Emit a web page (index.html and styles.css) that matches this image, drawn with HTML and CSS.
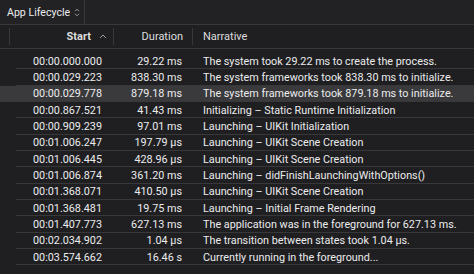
FILE: index.html
```html
<!DOCTYPE html>
<html lang="en">
<head>
  <meta charset="UTF-8">
  <title>App Lifecycle</title>
  <link rel="stylesheet" href="styles.css">
</head>
<body>
  <header class="toolbar">
    <div class="picker">
      <span>App Lifecycle</span>
      <svg class="updown" width="6" height="9" viewBox="0 0 6 9"><path d="M1 3.2 3 1.2 5 3.2M1 5.8 3 7.8 5 5.8" fill="none" stroke="currentColor" stroke-width="1"/></svg>
    </div>
  </header>

  <section class="table">
    <div class="head">
      <span class="gutter"></span>
      <span class="col start sorted">Start
        <svg class="caret" width="8" height="5" viewBox="0 0 8 5"><path d="M1 4 4 1 7 4" fill="none" stroke="currentColor" stroke-width="1"/></svg>
      </span>
      <span class="col dur">Duration</span>
      <span class="col narr">Narrative</span>
    </div>

    <div class="rows">
      <div class="row"><span class="start">00:00.000.000</span><span class="dur">29.22 ms</span><span class="narr">The system took 29.22 ms to create the process.</span></div>
      <div class="row"><span class="start">00:00.029.223</span><span class="dur">838.30 ms</span><span class="narr">The system frameworks took 838.30 ms to initialize.</span></div>
      <div class="row selected"><span class="start">00:00.029.778</span><span class="dur">879.18 ms</span><span class="narr">The system frameworks took 879.18 ms to initialize.</span></div>
      <div class="row"><span class="start">00:00.867.521</span><span class="dur">41.43 ms</span><span class="narr">Initializing – Static Runtime Initialization</span></div>
      <div class="row"><span class="start">00:00.909.239</span><span class="dur">97.01 ms</span><span class="narr">Launching – UIKit Initialization</span></div>
      <div class="row"><span class="start">00:01.006.247</span><span class="dur">197.79 µs</span><span class="narr">Launching – UIKit Scene Creation</span></div>
      <div class="row"><span class="start">00:01.006.445</span><span class="dur">428.96 µs</span><span class="narr">Launching – UIKit Scene Creation</span></div>
      <div class="row"><span class="start">00:01.006.874</span><span class="dur">361.20 ms</span><span class="narr">Launching – didFinishLaunchingWithOptions()</span></div>
      <div class="row"><span class="start">00:01.368.071</span><span class="dur">410.50 µs</span><span class="narr">Launching – UIKit Scene Creation</span></div>
      <div class="row"><span class="start">00:01.368.481</span><span class="dur">19.75 ms</span><span class="narr">Launching – Initial Frame Rendering</span></div>
      <div class="row"><span class="start">00:01.407.773</span><span class="dur">627.13 ms</span><span class="narr">The application was in the foreground for 627.13 ms.</span></div>
      <div class="row"><span class="start">00:02.034.902</span><span class="dur">1.04 µs</span><span class="narr">The transition between states took 1.04 µs.</span></div>
      <div class="row"><span class="start">00:03.574.662</span><span class="dur">16.46 s</span><span class="narr">Currently running in the foreground...</span></div>
    </div>
  </section>
</body>
</html>
```

FILE: styles.css
```css
:root {
  --bg: #1f1f21;
  --bar: #222224;
  --line: #38383a;
  --sel: #3a3a3c;
  --text: #ececee;
  --head: #dcdcde;
  --dim: #9a9a9e;
  --row-h: 16.33px;
  --cols: 10px 104px 79px 1fr;
}
*, *::before, *::after { box-sizing: border-box; }
html, body { height: 100%; }
body {
  margin: 0;
  background: var(--bg);
  color: var(--text);
  font-family: Roboto, "Liberation Sans", sans-serif;
  font-size: 10.8px;
  overflow: hidden;
}
.toolbar {
  height: 25px;
  background: var(--bar);
  border-bottom: 1px solid var(--line);
  display: flex;
}
.picker {
  width: 85px;
  padding-left: 7px;
  display: flex; align-items: center; gap: 4px;
  border-right: 1px solid var(--line);
  white-space: nowrap;
  font-size: 10.6px;
}
.picker .updown { color: var(--dim); }

.head {
  display: grid; grid-template-columns: var(--cols);
  height: 24px;
  align-items: center;
  border-bottom: 1px solid var(--line);
  color: var(--head);
  font-size: 11px;
}
.head .gutter, .head .col { height: 17px; border-right: 1px solid var(--line); display: flex; align-items: center; }
.head .col.narr { border-right: none; padding-left: 10px; }
.head .col.start { justify-content: flex-end; padding-right: 6px; gap: 8px; font-weight: 700; }
.head .col.dur { justify-content: flex-end; padding-right: 9px; }
.head .caret { color: var(--dim); }

.rows { padding-top: 4px; }
.row {
  display: grid; grid-template-columns: var(--cols);
  height: var(--row-h);
  align-items: center;
  background: linear-gradient(var(--line), var(--line)) 16px 100% / calc(100% - 16px) 1px no-repeat;
}
.row.selected { background-color: var(--sel); }
.row .start { grid-column: 2; text-align: right; padding-right: 12px; }
.row .dur { text-align: right; padding-right: 11px; }
.row .narr { padding-left: 10px; white-space: nowrap; }
```
